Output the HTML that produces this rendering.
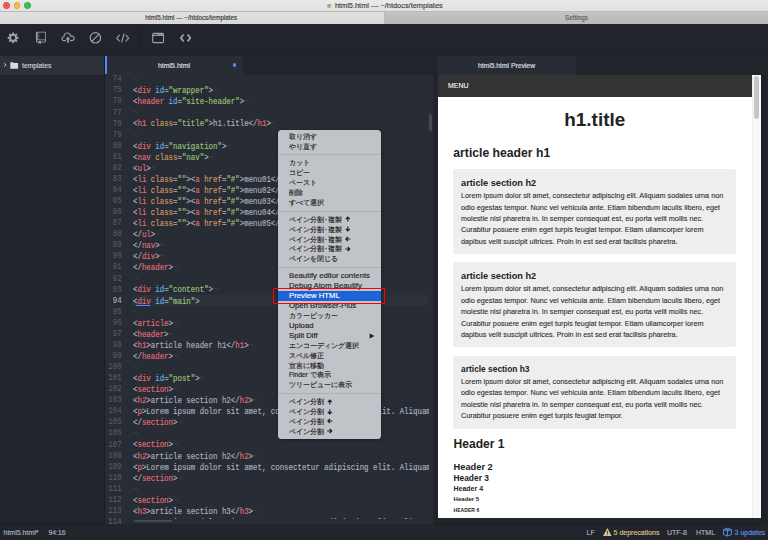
<!DOCTYPE html>
<html><head><meta charset="utf-8">
<style>
*{margin:0;padding:0;box-sizing:border-box}
html,body{width:768px;height:540px;overflow:hidden;background:#21252b;font-family:"Liberation Sans",sans-serif}
.a{position:absolute}
#titlebar{left:0;top:0;width:768px;height:12px;background:linear-gradient(#e9e9e9,#e2e2e2);border-bottom:1px solid #b9b9b9}
.tl{position:absolute;width:6.6px;height:6.6px;border-radius:50%;top:2.1px}
#ttext{left:-1px;top:0;width:768px;height:11px;font-size:7.4px;line-height:12.2px;color:#3e3e3e;text-align:center;padding-left:4px;-webkit-text-stroke:0.15px currentColor}
#tabs{left:0;top:12px;width:768px;height:12.5px;background:#d6d6d6}
#tabL{left:0;top:12px;width:384px;height:11.5px;background:linear-gradient(#e0e0e0,#d9d9d9);font-size:6.3px;line-height:11.8px;color:#3a3a3a;text-align:center;padding-right:1.4px;-webkit-text-stroke:0.15px currentColor}
#tabR{left:384px;top:12px;width:384px;height:11.5px;background:linear-gradient(#c4c4c4,#b8b8b8);border-left:1px solid #b9b9b9;font-size:6.3px;line-height:11.8px;color:#555;text-align:center;-webkit-text-stroke:0.1px currentColor}
#toolbar{left:0;top:23.5px;width:768px;height:28.5px;background:#21252b}
#tbline{left:0;top:52px;width:768px;height:1px;background:#1d2026}
.ic{position:absolute;stroke:#9da2ad;fill:none}
#tree{left:0;top:53px;width:104.5px;height:471px;background:#21252b;border-right:1px solid #1b1d23}
#treesel{left:0;top:56.2px;width:104px;height:18.6px;background:#2c313a}
#treetxt{left:22px;top:55.6px;height:19px;line-height:19px;font-size:6.75px;color:#d7dae0;-webkit-text-stroke:0.1px currentColor}
#tabbar{left:105px;top:56.2px;width:328px;height:18.8px;background:#21252b}
#tab1{left:105px;top:56.2px;width:138px;height:18.8px;background:#282c34;font-size:6.95px;line-height:20.4px;color:#e0e3e8;text-align:center;-webkit-text-stroke:0.12px currentColor}
#tab1b{left:105px;top:56px;width:1.6px;height:18px;background:#528bff}
#tabdot{left:232.7px;top:63.4px;width:3.2px;height:3.2px;border-radius:50%;background:#528bff}
#editor{left:105px;top:75px;width:328px;height:448.9px;background:#282c34;overflow:hidden;z-index:2}
#curline{left:26.8px;top:219.8px;width:296.7px;height:11.07px;background:#2c313a}
#uline{left:31.1px;top:229.8px;width:14px;height:1.1px;background:#528bff}
.ln{position:absolute;left:0;width:121.6px;text-align:right;transform:scaleX(0.9045);transform-origin:121.6px 0;font-family:"Liberation Mono",monospace;font-size:8.2px;line-height:11.068px;color:#555d6c;white-space:pre}
.ln.cur{color:#abb2bf}
.cl{position:absolute;left:132.5px;transform:scaleX(0.9045);transform-origin:0 0;font-family:"Liberation Mono",monospace;font-size:8.2px;line-height:11.068px;color:#abb2bf;white-space:pre}
.p{color:#abb2bf}.t{color:#e06c75}.at{color:#d19a66}.ai{color:#61afef}.s{color:#98c379}.x{color:#abb2bf}.inv{color:#3b4048}
#codewrap{left:0;top:0;width:323.5px;height:449px;overflow:hidden}
#hscroll{left:26px;top:444px;width:302px;height:5px;background:#282c34}
#hthumb{left:29px;top:445px;width:38px;height:2px;border-radius:1px;background:#434a57}
#vthumb{left:324.3px;top:38.7px;width:2.6px;height:17px;border-radius:1.3px;background:#434a57}
#divider{left:433px;top:53px;width:4.5px;height:471px;background:#21252b}
#ptabbar{left:437.5px;top:56.2px;width:330.5px;height:18.8px;background:#21252b}
#ptab{left:437.5px;top:56.2px;width:138px;height:18.8px;background:#282c34;font-size:6.75px;line-height:19.8px;color:#e0e3e8;text-align:center;-webkit-text-stroke:0.12px currentColor}
#preview{left:437.5px;top:75px;width:314.5px;height:443px;background:#fff;overflow:hidden;color:#222}
#menubar{left:0;top:0;width:314.5px;height:21.7px;background:#333333;color:#fff;font-size:7.9px;line-height:22.2px;padding-left:10.7px;-webkit-text-stroke:0.1px currentColor}
#pscroll{left:751.8px;top:75px;width:9.4px;height:443.3px;background:#f8f8f8;border-left:0.6px solid #ececec}
#rstrip{left:761.2px;top:74.5px;width:4.7px;height:449px;background:#1d2026}
#pthumb{left:754px;top:75.9px;width:4.8px;height:43.3px;border-radius:2.4px;background:#c6c6c6}
.pv{position:absolute;white-space:nowrap;font-weight:bold;color:#222;line-height:20px;height:20px}
.box{position:absolute;left:15.8px;width:282.7px;background:#eeeeee;border-radius:2px}
.pp{position:absolute;left:23.6px;white-space:nowrap;font-size:7.6px;line-height:10px;height:10px;color:#2e2e2e;transform:scaleX(0.956);transform-origin:0 0;-webkit-text-stroke:0.12px currentColor}
#status{left:0;top:523.2px;width:768px;height:16.5px;background:#21252b;border-top:1px solid #1b1d23}
.st{position:absolute;top:525px;height:16px;line-height:16px;font-size:7px;color:#a9b0bc;white-space:nowrap;-webkit-text-stroke:0.15px currentColor}
#menu{z-index:5;left:277.8px;top:129.8px;width:103px;height:309.4px;background:#c0c3c7;border-radius:3.5px;box-shadow:0 1px 4px rgba(0,0,0,.35)}
.mi{position:absolute;left:0;width:103px;height:9.95px;line-height:9.6px;font-size:7.75px;color:#1e1e1e;padding-left:11.2px;white-space:nowrap}
.mi.hl{background:#1d63d8;color:#fff}
.jp{font-size:6.6px;-webkit-text-stroke:0.25px currentColor}
.mi{-webkit-text-stroke:0.15px currentColor}
.cl{-webkit-text-stroke:0.15px currentColor}.ln{-webkit-text-stroke:0.1px currentColor}
.arr{margin-left:3.2px;vertical-align:-0.6px}
.msep{position:absolute;left:0;width:103px;height:1px;background:#adb0b4}
.sub{position:absolute;left:91.6px;top:2.7px}
#redbox{z-index:6;left:272.8px;top:288px;width:112.6px;height:15.9px;border:1.6px solid #ff0000}
</style></head><body>
<div id="titlebar" class="a"></div>
<div class="tl" style="left:2.95px;background:#fc605c;border:0.5px solid #e0443e"></div>
<div class="a" style="left:5.6px;top:4.7px;width:1.4px;height:1.4px;border-radius:50%;background:#4d0000"></div>
<div class="tl" style="left:13.6px;background:#fdbc40;border:0.5px solid #dea236"></div>
<div class="tl" style="left:24.1px;background:#34c84a;border:0.5px solid #27aa35"></div>
<div id="ttext" class="a"><span style="display:inline-block;width:4.4px;height:4.4px;background:conic-gradient(#e57373,#f5d76e,#81c784,#64b5f6,#e57373);border-radius:50%;margin-right:3.2px;vertical-align:0px"></span>html5.html — ~/htdocs/templates</div>
<div id="tabL" class="a">html5.html — ~/htdocs/templates</div>
<div id="tabR" class="a">Settings</div>
<div id="toolbar" class="a"></div>
<div id="tbline" class="a"></div>
<!-- toolbar icons -->
<svg class="a" style="left:0;top:24px" width="200" height="28" viewBox="0 24 200 28">
 <g fill="#9da2ad" stroke="none">
  <path d="M11.99 34.01L12.22 32.42L13.98 32.42L14.21 34.01L15.04 34.35L16.32 33.39L17.56 34.63L16.60 35.91L16.94 36.74L18.53 36.97L18.53 38.73L16.94 38.96L16.60 39.79L17.56 41.07L16.32 42.31L15.04 41.35L14.21 41.69L13.98 43.28L12.22 43.28L11.99 41.69L11.16 41.35L9.88 42.31L8.64 41.07L9.60 39.79L9.26 38.96L7.67 38.73L7.67 36.97L9.26 36.74L9.60 35.91L8.64 34.63L9.88 33.39L11.16 34.35Z M15.20 37.85A2.1 2.1 0 1 0 11.00 37.85A2.1 2.1 0 1 0 15.20 37.85Z" fill-rule="evenodd"/>
 </g>
 <g stroke="#9da2ad" fill="none" stroke-width="1">
  <path transform="translate(36 31.8) scale(0.825 0.77)" fill="#9da2ad" stroke="none" d="M4 9H3V8h1v1zm0-3H3v1h1V6zm0-2H3v1h1V4zm0-2H3v1h1V2zm8-1v12c0 .55-.45 1-1 1H6v2l-1.5-1.5L3 16v-2H1c-.55 0-1-.45-1-1V1c0-.55.45-1 1-1h10c.55 0 1 .45 1 1zm-1 10H1v2h2v-1h3v1h5v-2zm0-10H2v9h9V1z"/>
  <path transform="translate(0 -0.6)" d="M65.8 41.20H63.90A1.9 1.9 0 1 1 63.92 37.40A3.4 3.4 0 1 1 70.70 36.94A2.3 2.3 0 1 1 71.90 41.20H70" stroke-width="1.1"/>
  <path d="M67.9 43.0v-4.6" stroke-width="1.5"/>
  <path d="M65.6 39.5L67.9 36.6L70.2 39.5Z" fill="#9da2ad" stroke="none"/>
  <circle cx="95.4" cy="37.8" r="5.2" stroke-width="1.2"/>
  <path d="M91.8 41.4l7.2-7.2" stroke-width="1.2"/>
  <path d="M119.7 34.9L116.8 38.2L119.7 41.5M125.7 34.9L128.6 38.2L125.7 41.5M124.1 33.5L121.6 42.3" stroke-width="1.1"/>
  <rect x="152.7" y="33.4" width="10.8" height="9.2" rx="1.2" stroke-width="1.1"/>
  <path d="M152.7 35.5h10.8" stroke-width="0.9"/><path d="M154.2 34.4h.7M155.9 34.4h.7M157.6 34.4h5.4" stroke-width="0.9"/>
  <path d="M183.6 34.5l-2.7 3.45 2.7 3.45M187.6 34.5l2.7 3.45-2.7 3.45" stroke-width="1.8"/>
 </g>
 <path d="M140.6 27v22.7" stroke="#1b1d23" stroke-width="0.9"/>
</svg>
<div id="tree" class="a"></div>
<div id="treesel" class="a"></div>
<svg class="a" style="left:0;top:56px" width="22" height="19" viewBox="0 56 22 19">
 <path d="M4.1 63.3l2 1.6-2 1.6" stroke="#c5cad3" stroke-width="0.9" fill="none"/>
 <path d="M10.3 62.2h3l.8.8h4v5.8h-7.8z" fill="#d7dae0"/>
</svg>
<div id="treetxt" class="a">templates</div>
<div id="tabbar" class="a"></div>
<div id="tab1" class="a">html5.html</div>
<div id="tab1b" class="a"></div>
<div id="tabdot" class="a"></div>
<div id="editor" class="a">
 <div id="curline" class="a"></div>
 <div id="uline" class="a"></div>
 <div id="codewrap" class="a"><div style="position:absolute;left:-105px;top:-75px;width:768px;height:600px">
<div class="ln" style="top:73.30px">74</div>
<div class="cl" style="top:74.20px"><span class="inv">¬</span></div>
<div class="ln" style="top:84.37px">75</div>
<div class="cl" style="top:85.27px"><span class="p">&lt;</span><span class="t">div</span><span class="x"> </span><span class="ai">id</span><span class="p">=</span><span class="s">&quot;wrapper&quot;</span><span class="p">&gt;</span><span class="inv">¬</span></div>
<div class="ln" style="top:95.44px">76</div>
<div class="cl" style="top:96.34px"><span class="p">&lt;</span><span class="t">header</span><span class="x"> </span><span class="ai">id</span><span class="p">=</span><span class="s">&quot;site-header&quot;</span><span class="p">&gt;</span><span class="inv">¬</span></div>
<div class="ln" style="top:106.50px">77</div>
<div class="cl" style="top:107.40px"><span class="inv">¬</span></div>
<div class="ln" style="top:117.57px">78</div>
<div class="cl" style="top:118.47px"><span class="p">&lt;</span><span class="t">h1</span><span class="x"> </span><span class="at">class</span><span class="p">=</span><span class="s">&quot;title&quot;</span><span class="p">&gt;</span><span class="x">h1.title</span><span class="p">&lt;/</span><span class="t">h1</span><span class="x">&gt;</span><span class="inv">¬</span></div>
<div class="ln" style="top:128.64px">79</div>
<div class="cl" style="top:129.54px"><span class="inv">¬</span></div>
<div class="ln" style="top:139.71px">80</div>
<div class="cl" style="top:140.61px"><span class="p">&lt;</span><span class="t">div</span><span class="x"> </span><span class="ai">id</span><span class="p">=</span><span class="s">&quot;navigation&quot;</span><span class="p">&gt;</span><span class="inv">¬</span></div>
<div class="ln" style="top:150.78px">81</div>
<div class="cl" style="top:151.68px"><span class="p">&lt;</span><span class="t">nav</span><span class="x"> </span><span class="at">class</span><span class="p">=</span><span class="s">&quot;nav&quot;</span><span class="p">&gt;</span><span class="inv">¬</span></div>
<div class="ln" style="top:161.84px">82</div>
<div class="cl" style="top:162.74px"><span class="p">&lt;</span><span class="t">ul</span><span class="p">&gt;</span><span class="inv">¬</span></div>
<div class="ln" style="top:172.91px">83</div>
<div class="cl" style="top:173.81px"><span class="p">&lt;</span><span class="t">li</span><span class="x"> </span><span class="at">class</span><span class="p">=</span><span class="s">&quot;&quot;</span><span class="p">&gt;</span><span class="p">&lt;</span><span class="t">a</span><span class="x"> </span><span class="at">href</span><span class="p">=</span><span class="s">&quot;#&quot;</span><span class="p">&gt;</span><span class="x">menu01</span><span class="p">&lt;/</span><span class="t">a</span><span class="x">&gt;</span><span class="p">&lt;/</span><span class="t">li</span><span class="x">&gt;</span><span class="inv">¬</span></div>
<div class="ln" style="top:183.98px">84</div>
<div class="cl" style="top:184.88px"><span class="p">&lt;</span><span class="t">li</span><span class="x"> </span><span class="at">class</span><span class="p">=</span><span class="s">&quot;&quot;</span><span class="p">&gt;</span><span class="p">&lt;</span><span class="t">a</span><span class="x"> </span><span class="at">href</span><span class="p">=</span><span class="s">&quot;#&quot;</span><span class="p">&gt;</span><span class="x">menu02</span><span class="p">&lt;/</span><span class="t">a</span><span class="x">&gt;</span><span class="p">&lt;/</span><span class="t">li</span><span class="x">&gt;</span><span class="inv">¬</span></div>
<div class="ln" style="top:195.05px">85</div>
<div class="cl" style="top:195.95px"><span class="p">&lt;</span><span class="t">li</span><span class="x"> </span><span class="at">class</span><span class="p">=</span><span class="s">&quot;&quot;</span><span class="p">&gt;</span><span class="p">&lt;</span><span class="t">a</span><span class="x"> </span><span class="at">href</span><span class="p">=</span><span class="s">&quot;#&quot;</span><span class="p">&gt;</span><span class="x">menu03</span><span class="p">&lt;/</span><span class="t">a</span><span class="x">&gt;</span><span class="p">&lt;/</span><span class="t">li</span><span class="x">&gt;</span><span class="inv">¬</span></div>
<div class="ln" style="top:206.12px">86</div>
<div class="cl" style="top:207.02px"><span class="p">&lt;</span><span class="t">li</span><span class="x"> </span><span class="at">class</span><span class="p">=</span><span class="s">&quot;&quot;</span><span class="p">&gt;</span><span class="p">&lt;</span><span class="t">a</span><span class="x"> </span><span class="at">href</span><span class="p">=</span><span class="s">&quot;#&quot;</span><span class="p">&gt;</span><span class="x">menu04</span><span class="p">&lt;/</span><span class="t">a</span><span class="x">&gt;</span><span class="p">&lt;/</span><span class="t">li</span><span class="x">&gt;</span><span class="inv">¬</span></div>
<div class="ln" style="top:217.18px">87</div>
<div class="cl" style="top:218.08px"><span class="p">&lt;</span><span class="t">li</span><span class="x"> </span><span class="at">class</span><span class="p">=</span><span class="s">&quot;&quot;</span><span class="p">&gt;</span><span class="p">&lt;</span><span class="t">a</span><span class="x"> </span><span class="at">href</span><span class="p">=</span><span class="s">&quot;#&quot;</span><span class="p">&gt;</span><span class="x">menu05</span><span class="p">&lt;/</span><span class="t">a</span><span class="x">&gt;</span><span class="p">&lt;/</span><span class="t">li</span><span class="x">&gt;</span><span class="inv">¬</span></div>
<div class="ln" style="top:228.25px">88</div>
<div class="cl" style="top:229.15px"><span class="p">&lt;/</span><span class="t">ul</span><span class="x">&gt;</span><span class="inv">¬</span></div>
<div class="ln" style="top:239.32px">89</div>
<div class="cl" style="top:240.22px"><span class="p">&lt;/</span><span class="t">nav</span><span class="x">&gt;</span><span class="inv">¬</span></div>
<div class="ln" style="top:250.39px">90</div>
<div class="cl" style="top:251.29px"><span class="p">&lt;/</span><span class="t">div</span><span class="x">&gt;</span><span class="inv">¬</span></div>
<div class="ln" style="top:261.46px">91</div>
<div class="cl" style="top:262.36px"><span class="p">&lt;/</span><span class="t">header</span><span class="x">&gt;</span><span class="inv">¬</span></div>
<div class="ln" style="top:272.52px">92</div>
<div class="cl" style="top:273.42px"><span class="inv">¬</span></div>
<div class="ln" style="top:283.59px">93</div>
<div class="cl" style="top:284.49px"><span class="p">&lt;</span><span class="t">div</span><span class="x"> </span><span class="ai">id</span><span class="p">=</span><span class="s">&quot;content&quot;</span><span class="p">&gt;</span><span class="inv">¬</span></div>
<div class="ln cur" style="top:294.66px">94</div>
<div class="cl" style="top:295.56px"><span class="p">&lt;</span><span class="t">div</span><span class="x"> </span><span class="ai">id</span><span class="p">=</span><span class="s">&quot;main&quot;</span><span class="p">&gt;</span><span class="inv">¬</span></div>
<div class="ln" style="top:305.73px">95</div>
<div class="cl" style="top:306.63px"><span class="inv">¬</span></div>
<div class="ln" style="top:316.80px">96</div>
<div class="cl" style="top:317.70px"><span class="p">&lt;</span><span class="t">article</span><span class="p">&gt;</span><span class="inv">¬</span></div>
<div class="ln" style="top:327.86px">97</div>
<div class="cl" style="top:328.76px"><span class="p">&lt;</span><span class="t">header</span><span class="p">&gt;</span><span class="inv">¬</span></div>
<div class="ln" style="top:338.93px">98</div>
<div class="cl" style="top:339.83px"><span class="p">&lt;</span><span class="t">h1</span><span class="p">&gt;</span><span class="x">article header h1</span><span class="p">&lt;/</span><span class="t">h1</span><span class="x">&gt;</span><span class="inv">¬</span></div>
<div class="ln" style="top:350.00px">99</div>
<div class="cl" style="top:350.90px"><span class="p">&lt;/</span><span class="t">header</span><span class="x">&gt;</span><span class="inv">¬</span></div>
<div class="ln" style="top:361.07px">100</div>
<div class="cl" style="top:361.97px"><span class="inv">¬</span></div>
<div class="ln" style="top:372.14px">101</div>
<div class="cl" style="top:373.04px"><span class="p">&lt;</span><span class="t">div</span><span class="x"> </span><span class="ai">id</span><span class="p">=</span><span class="s">&quot;post&quot;</span><span class="p">&gt;</span><span class="inv">¬</span></div>
<div class="ln" style="top:383.20px">102</div>
<div class="cl" style="top:384.10px"><span class="p">&lt;</span><span class="t">section</span><span class="p">&gt;</span><span class="inv">¬</span></div>
<div class="ln" style="top:394.27px">103</div>
<div class="cl" style="top:395.17px"><span class="p">&lt;</span><span class="t">h2</span><span class="p">&gt;</span><span class="x">article section h2</span><span class="p">&lt;/</span><span class="t">h2</span><span class="x">&gt;</span><span class="inv">¬</span></div>
<div class="ln" style="top:405.34px">104</div>
<div class="cl" style="top:406.24px"><span class="p">&lt;</span><span class="t">p</span><span class="p">&gt;</span><span class="x">Lorem ipsum dolor sit amet, consectetur adipiscing elit. Aliquam sodales urna non odio egestas tempor.</span></div>
<div class="ln" style="top:416.41px">105</div>
<div class="cl" style="top:417.31px"><span class="p">&lt;/</span><span class="t">section</span><span class="x">&gt;</span><span class="inv">¬</span></div>
<div class="ln" style="top:427.48px">106</div>
<div class="cl" style="top:428.38px"><span class="inv">¬</span></div>
<div class="ln" style="top:438.54px">107</div>
<div class="cl" style="top:439.44px"><span class="p">&lt;</span><span class="t">section</span><span class="p">&gt;</span><span class="inv">¬</span></div>
<div class="ln" style="top:449.61px">108</div>
<div class="cl" style="top:450.51px"><span class="p">&lt;</span><span class="t">h2</span><span class="p">&gt;</span><span class="x">article section h2</span><span class="p">&lt;/</span><span class="t">h2</span><span class="x">&gt;</span><span class="inv">¬</span></div>
<div class="ln" style="top:460.68px">109</div>
<div class="cl" style="top:461.58px"><span class="p">&lt;</span><span class="t">p</span><span class="p">&gt;</span><span class="x">Lorem ipsum dolor sit amet, consectetur adipiscing elit. Aliquam sodales urna non odio egestas tempor.</span></div>
<div class="ln" style="top:471.75px">110</div>
<div class="cl" style="top:472.65px"><span class="p">&lt;/</span><span class="t">section</span><span class="x">&gt;</span><span class="inv">¬</span></div>
<div class="ln" style="top:482.82px">111</div>
<div class="cl" style="top:483.72px"><span class="inv">¬</span></div>
<div class="ln" style="top:493.88px">112</div>
<div class="cl" style="top:494.78px"><span class="p">&lt;</span><span class="t">section</span><span class="p">&gt;</span><span class="inv">¬</span></div>
<div class="ln" style="top:504.95px">113</div>
<div class="cl" style="top:505.85px"><span class="p">&lt;</span><span class="t">h3</span><span class="p">&gt;</span><span class="x">article section h3</span><span class="p">&lt;/</span><span class="t">h3</span><span class="x">&gt;</span><span class="inv">¬</span></div>
<div class="ln" style="top:516.02px">114</div>
<div class="cl" style="top:516.92px"><span class="p">&lt;</span><span class="t">p</span><span class="p">&gt;</span><span class="x">Lorem ipsum dolor sit amet, consectetur adipiscing elit. Aliquam sodales urna non odio egestas tempor.</span></div>
 </div></div>
 <div id="hscroll" class="a"></div>
 <div id="hthumb" class="a"></div>
 <div id="vthumb" class="a"></div>
</div>
<div id="divider" class="a"></div>
<div id="ptabbar" class="a"></div>
<div id="ptab" class="a">html5.html Preview</div>
<div id="preview" class="a">
 <div id="menubar" class="a"><span style="display:inline-block;transform:scaleX(0.885);transform-origin:0 0">MENU</span></div>
<div class="pv" style="left:0;width:314.5px;text-align:center;top:35.15px;font-size:18.9px">h1.title</div>
<div class="pv" style="left:15.8px;top:67.57px;font-size:12.2px">article header h1</div>
<div class="box" style="top:94.20px;height:85.30px"></div>
<div class="pv" style="left:23.6px;top:97.71px;font-size:9.2px">article section h2</div>
<div class="pp" style="top:116.07px">Lorem ipsum dolor sit amet, consectetur adipiscing elit. Aliquam sodales urna non</div>
<div class="pp" style="top:127.53px">odio egestas tempor. Nunc vel vehicula ante. Etiam bibendum iaculis libero, eget</div>
<div class="pp" style="top:138.99px">molestie nisl pharetra in. In semper consequat est, eu porta velit mollis nec.</div>
<div class="pp" style="top:150.45px">Curabitur posuere enim eget turpis feugiat tempor. Etiam ullamcorper lorem</div>
<div class="pp" style="top:161.91px">dapibus velit suscipit ultrices. Proin in est sed erat facilisis pharetra.</div>
<div class="box" style="top:187.40px;height:85.10px"></div>
<div class="pv" style="left:23.6px;top:191.11px;font-size:9.2px">article section h2</div>
<div class="pp" style="top:209.17px">Lorem ipsum dolor sit amet, consectetur adipiscing elit. Aliquam sodales urna non</div>
<div class="pp" style="top:220.63px">odio egestas tempor. Nunc vel vehicula ante. Etiam bibendum iaculis libero, eget</div>
<div class="pp" style="top:232.09px">molestie nisl pharetra in. In semper consequat est, eu porta velit mollis nec.</div>
<div class="pp" style="top:243.55px">Curabitur posuere enim eget turpis feugiat tempor. Etiam ullamcorper lorem</div>
<div class="pp" style="top:255.01px">dapibus velit suscipit ultrices. Proin in est sed erat facilisis pharetra.</div>
<div class="box" style="top:280.60px;height:73.00px"></div>
<div class="pv" style="left:23.6px;top:283.99px;font-size:8.4px">article section h3</div>
<div class="pp" style="top:301.87px">Lorem ipsum dolor sit amet, consectetur adipiscing elit. Aliquam sodales urna non</div>
<div class="pp" style="top:313.33px">odio egestas tempor. Nunc vel vehicula ante. Etiam bibendum iaculis libero, eget</div>
<div class="pp" style="top:324.79px">molestie nisl pharetra in. In semper consequat est, eu porta velit mollis nec.</div>
<div class="pp" style="top:336.25px">Curabitur posuere enim eget turpis feugiat tempor.</div>
<div class="pv" style="left:16.0px;top:359.41px;font-size:12.1px">Header 1</div>
<div class="pv" style="left:16.0px;top:381.58px;font-size:9.3px">Header 2</div>
<div class="pv" style="left:16.0px;top:393.49px;font-size:8.4px">Header 3</div>
<div class="pv" style="left:16.0px;top:404.07px;font-size:7.0px">Header 4</div>
<div class="pv" style="left:16.0px;top:413.79px;font-size:6.1px">Header 5</div>
<div class="pv" style="left:16.0px;top:424.83px;font-size:5.1px">HEADER 6</div>
</div>
<div id="pscroll" class="a"></div>
<div id="pthumb" class="a"></div>
<div id="rstrip" class="a"></div>
<div id="status" class="a"></div>
<div class="st" style="left:3.5px">html5.html*</div>
<div class="st" style="left:48.5px;font-size:6.75px">94:16</div>
<div class="st" style="left:586.5px">LF</div>
<svg class="a" style="left:602px;top:527px" width="11" height="10"><path d="M5.4 .9L9.6 9.1H1.1z" fill="#dfc18f"/><path d="M5.4 3.9v2.5M5.4 7.2v.9" stroke="#21252b" stroke-width="0.9"/></svg>
<div class="st" style="left:613.6px;color:#dcc08f">5 deprecations</div>
<div class="st" style="left:667px">UTF-8</div>
<div class="st" style="left:696px">HTML</div>
<svg class="a" style="left:722px;top:527px" width="11" height="10"><path d="M1.5 2.6L5.5 1.2 9.5 2.6V7.6L5.5 9 1.5 7.6z M5.5 3.2V9 M1.5 2.6L5.5 3.9 9.5 2.6 M3.4 1.9l4.1 1.4" stroke="#5f8fe6" stroke-width="0.9" fill="none" stroke-linejoin="round"/></svg>
<div class="st" style="left:734.6px;color:#5f8fe6">3 updates</div>
<div id="menu" class="a">
<div class="mi jp" style="top:2.00px">取り消す</div>
<div class="mi jp" style="top:11.95px">やり直す</div>
<div class="msep" style="top:24.70px"></div>
<div class="mi jp" style="top:28.50px">カット</div>
<div class="mi jp" style="top:38.45px">コピー</div>
<div class="mi jp" style="top:48.40px">ペースト</div>
<div class="mi jp" style="top:58.35px">削除</div>
<div class="mi jp" style="top:68.30px">すべて選択</div>
<div class="msep" style="top:81.05px"></div>
<div class="mi jp" style="top:84.85px">ペイン分割･複製<svg class="arr" width="6" height="6" viewBox="0 0 6 6"><path d="M2.8 5.6V1.4M.8 3.2L2.8 1.1 4.8 3.2" stroke="currentColor" stroke-width="1.2" fill="none"/></svg></div>
<div class="mi jp" style="top:94.80px">ペイン分割･複製<svg class="arr" width="6" height="6" viewBox="0 0 6 6"><path d="M2.8 .4v4.2M.8 2.8L2.8 4.9 4.8 2.8" stroke="currentColor" stroke-width="1.2" fill="none"/></svg></div>
<div class="mi jp" style="top:104.75px">ペイン分割･複製<svg class="arr" width="6" height="6" viewBox="0 0 6 6"><path d="M5.4 3H1.2M3 1L.9 3 3 5" stroke="currentColor" stroke-width="1.2" fill="none"/></svg></div>
<div class="mi jp" style="top:114.70px">ペイン分割･複製<svg class="arr" width="6" height="6" viewBox="0 0 6 6"><path d="M.2 3h4.2M2.6 1l2.1 2-2.1 2" stroke="currentColor" stroke-width="1.2" fill="none"/></svg></div>
<div class="mi jp" style="top:124.65px">ペインを閉じる</div>
<div class="msep" style="top:137.40px"></div>
<div class="mi" style="top:141.20px">Beautify editor contents</div>
<div class="mi" style="top:151.15px">Debug Atom Beautify</div>
<div class="mi hl" style="top:161.10px">Preview HTML</div>
<div class="mi" style="top:171.05px">Open Browser-Plus</div>
<div class="mi jp" style="top:181.00px">カラーピッカー</div>
<div class="mi" style="top:190.95px">Upload</div>
<div class="mi" style="top:200.90px">Split Diff<svg class="sub" width="6" height="6" viewBox="0 0 6 6"><path d="M0.6 0.6L5.4 3 0.6 5.4z" fill="#1e1e1e"/></svg></div>
<div class="mi jp" style="top:210.85px">エンコーディング選択</div>
<div class="mi jp" style="top:220.80px">スペル修正</div>
<div class="mi jp" style="top:230.75px">宣言に移動</div>
<div class="mi jp" style="top:240.70px">Finder で表示</div>
<div class="mi jp" style="top:250.65px">ツリービューに表示</div>
<div class="msep" style="top:263.40px"></div>
<div class="mi jp" style="top:267.20px">ペイン分割<svg class="arr" width="6" height="6" viewBox="0 0 6 6"><path d="M2.8 5.6V1.4M.8 3.2L2.8 1.1 4.8 3.2" stroke="currentColor" stroke-width="1.2" fill="none"/></svg></div>
<div class="mi jp" style="top:277.15px">ペイン分割<svg class="arr" width="6" height="6" viewBox="0 0 6 6"><path d="M2.8 .4v4.2M.8 2.8L2.8 4.9 4.8 2.8" stroke="currentColor" stroke-width="1.2" fill="none"/></svg></div>
<div class="mi jp" style="top:287.10px">ペイン分割<svg class="arr" width="6" height="6" viewBox="0 0 6 6"><path d="M5.4 3H1.2M3 1L.9 3 3 5" stroke="currentColor" stroke-width="1.2" fill="none"/></svg></div>
<div class="mi jp" style="top:297.05px">ペイン分割<svg class="arr" width="6" height="6" viewBox="0 0 6 6"><path d="M.2 3h4.2M2.6 1l2.1 2-2.1 2" stroke="currentColor" stroke-width="1.2" fill="none"/></svg></div>
</div>
<div id="redbox" class="a"></div>
</body></html>
